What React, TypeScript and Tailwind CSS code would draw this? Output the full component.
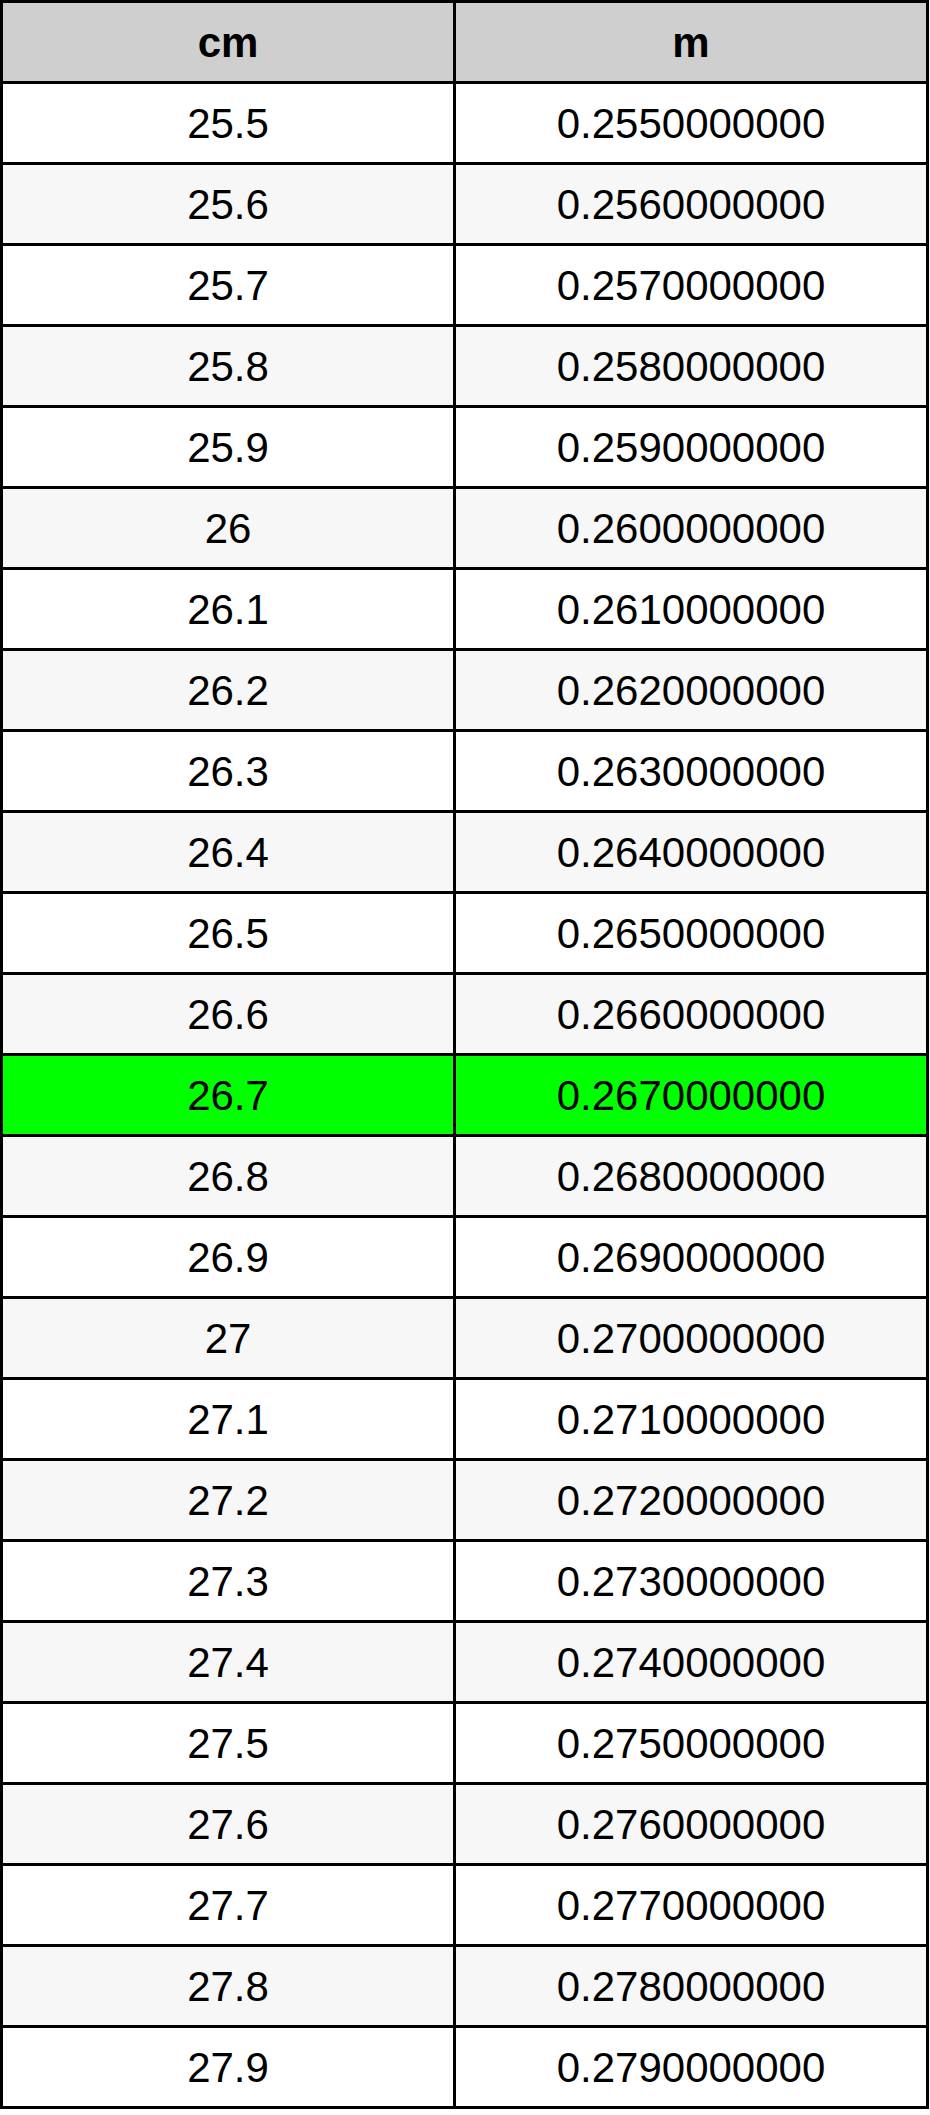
const rows: { cm: string; m: string }[] = [
  "25.5", "25.6", "25.7", "25.8", "25.9", "26", "26.1", "26.2", "26.3", "26.4",
  "26.5", "26.6", "26.7", "26.8", "26.9", "27", "27.1", "27.2", "27.3", "27.4",
  "27.5", "27.6", "27.7", "27.8", "27.9",
].map((cm) => ({ cm, m: (parseFloat(cm) / 100).toFixed(10) }));

export default function App() {
  return (
    <div className="bg-white min-h-[2115px] font-['Liberation_Sans',Arial,sans-serif] text-black">
      <div className="w-[929px] border-l-[3px] border-t-[3px] border-black">
        {/* header */}
        <div className="flex h-[81px] bg-[#cfcfcf] text-[42px] font-bold">
          <div className="w-[453px] border-r-[3px] border-b-[3px] border-black flex items-center justify-center">
            cm
          </div>
          <div className="w-[473px] border-r-[3px] border-b-[3px] border-black flex items-center justify-center">
            m
          </div>
        </div>

        {rows.map((r, i) => {
          const hl = r.cm === "26.7";
          const bg = hl ? "bg-[#00ff00]" : i % 2 === 0 ? "bg-white" : "bg-[#f7f7f7]";
          return (
            <div key={r.cm} className={`flex h-[81px] text-[42px] ${bg}`}>
              <div className="w-[453px] border-r-[3px] border-b-[3px] border-black flex items-center justify-center">
                {r.cm}
              </div>
              <div className="w-[473px] border-r-[3px] border-b-[3px] border-black flex items-center justify-center">
                {r.m}
              </div>
            </div>
          );
        })}
      </div>
    </div>
  );
}
